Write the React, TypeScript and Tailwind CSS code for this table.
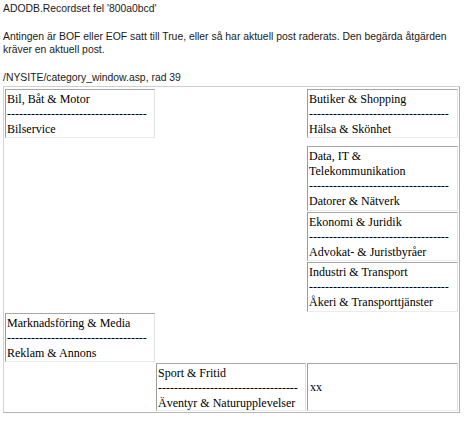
import React from "react";

const DASH = "-".repeat(35);

function Box({
  className = "",
  children,
}: {
  className?: string;
  children: React.ReactNode;
}) {
  return (
    <div
      className={
        "border border-t-[#a6a6a6] border-l-[#9c9c9c] border-r-[#e2e2e2] border-b-[#ebebeb] pt-[2px] pl-px " +
        className
      }
    >
      {children}
    </div>
  );
}

function Cat({ title, sub, className = "" }: { title: React.ReactNode; sub: string; className?: string }) {
  return (
    <Box className={className}>
      <div>{title}</div>
      <div>{DASH}</div>
      <div>{sub}</div>
    </Box>
  );
}

export default function App() {
  return (
    <div className="w-[474px] h-[441px] bg-white overflow-hidden text-black">
      <div className="pl-[3px] pt-[1.5px] font-['Liberation_Sans',Arial,sans-serif] text-[10.4px] leading-[13px] text-[#1a1a1a]">
        <p>ADODB.Recordset fel '800a0bcd'</p>
        <p className="mt-[15px]">
          Antingen är BOF eller EOF satt till True, eller så har aktuell post raderats. Den begärda åtgärden
          <br />
          kräver en aktuell post.
        </p>
        <p className="mt-[15.6px]">/NYSITE/category_window.asp, rad 39</p>
      </div>

      <div className="ml-[3px] mt-[2px] w-[457px] border border-t-[#cfcfcf] border-l-[#d2d2d2] border-r-[#b0b0b0] border-b-[#b4b4b4] pt-[2px] pb-px px-px grid grid-cols-[150px_150px_151px] grid-rows-[56px_65px_49px_50px_49px_48px] gap-px font-['Liberation_Serif','Times_New_Roman',serif] text-[12px] leading-[15px]">
        <Cat className="col-start-1 row-start-1 self-start" title="Bil, Båt & Motor" sub="Bilservice" />
        <Cat className="col-start-3 row-start-1 self-start" title="Butiker & Shopping" sub="Hälsa & Skönhet" />
        <Cat
          className="col-start-3 row-start-2"
          title={
            <>
              Data, IT &amp;
              <br />
              Telekommunikation
            </>
          }
          sub="Datorer & Nätverk"
        />
        <Cat className="col-start-3 row-start-3" title="Ekonomi & Juridik" sub="Advokat- & Juristbyråer" />
        <Cat className="col-start-3 row-start-4" title="Industri & Transport" sub="Åkeri & Transporttjänster" />
        <Cat className="col-start-1 row-start-5" title="Marknadsföring & Media" sub="Reklam & Annons" />
        <Cat className="col-start-2 row-start-6" title="Sport & Fritid" sub="Äventyr & Naturupplevelser" />
        <Box className="col-start-3 row-start-6 flex items-center !pt-0 !pl-[2px]">
          <span>xx</span>
        </Box>
      </div>
    </div>
  );
}
